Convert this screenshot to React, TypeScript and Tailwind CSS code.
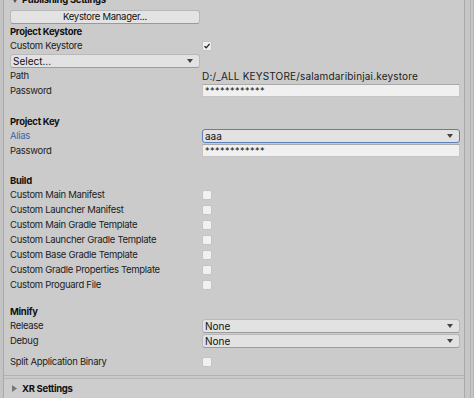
import React from "react"

const font = { fontFamily: "Inter, 'Liberation Sans', sans-serif" }

function Check({ checked }: { checked?: boolean }) {
  return (
    <div className="flex h-[10px] w-[10px] items-center justify-center rounded-[2px] border border-[#c4c4c4] bg-[#f1f1f1]">
      {checked && (
        <svg width="8" height="8" viewBox="0 0 8 8">
          <path d="M1.5 4.2 L3.2 5.8 L6.6 1.8" fill="none" stroke="#222" strokeWidth="1.3" />
        </svg>
      )}
    </div>
  )
}

function Caret() {
  return (
    <svg width="6" height="4" viewBox="0 0 6 4" className="shrink-0">
      <path d="M0 0 L6 0 L3 4 Z" fill="#444" />
    </svg>
  )
}

function Dropdown({ value, focused }: { value: string; focused?: boolean }) {
  return (
    <div
      className={
        "flex h-[14px] w-full items-center justify-between rounded-[3px] bg-[#e2e2e2] pl-[2px] pr-[6px] " +
        (focused ? "border border-[#5a7fb8]" : "border border-[#b9b9b9] border-b-[#9c9c9c]")
      }
    >
      <span className="text-[10px] leading-none text-[#111]">{value}</span>
      <Caret />
    </div>
  )
}

function TextField({ value }: { value: string }) {
  return (
    <div className="flex h-[13px] w-full items-center border border-[#c6c6c6] border-t-[#a9a9a9] bg-[#f0f0f0] px-[2px]">
      <span className="text-[9px] leading-none tracking-[0.5px] text-[#111]">{value}</span>
    </div>
  )
}

function Row({ label, blue, children }: { label: string; blue?: boolean; children?: React.ReactNode }) {
  return (
    <div className="flex h-[15px] items-center">
      <div
        className={
          "w-[192px] shrink-0 text-[9.5px] leading-none tracking-[-0.3px] " + (blue ? "text-[#3f63a3]" : "text-[#1c1c1c]")
        }
      >
        {label}
      </div>
      <div className="flex flex-1 items-center">{children}</div>
    </div>
  )
}

function Heading({ children }: { children: string }) {
  return (
    <div className="flex h-[13px] items-center text-[9.5px] font-bold leading-none tracking-[-0.3px] text-[#111]">
      {children}
    </div>
  )
}

export default function App() {
  const build = [
    "Custom Main Manifest",
    "Custom Launcher Manifest",
    "Custom Main Gradle Template",
    "Custom Launcher Gradle Template",
    "Custom Base Gradle Template",
    "Custom Gradle Properties Template",
    "Custom Proguard File",
  ]
  return (
    <div className="flex h-[398px] w-[474px] overflow-hidden bg-[#c9c9c9]" style={font}>
      <div className="w-[3px] shrink-0 bg-[#c4c4c4]" />
      <div className="flex w-[462px] shrink-0 flex-col border-x border-[#a9a9a9] bg-[#cbcbcb]">
        {/* Publishing Settings */}
        <div className="flex flex-col border-b border-[#b3b3b3] pb-[6px] pl-[6px] pr-[4px]">
          <div className="-mt-[7px] flex h-[14px] items-center gap-[4px] pl-[2px]">
            <svg width="6" height="5" viewBox="0 0 6 5"><path d="M0 0 L6 0 L3 5 Z" fill="#555" /></svg>
            <span className="text-[9.5px] font-bold leading-none tracking-[-0.3px] text-[#111]">Publishing Settings</span>
          </div>
          <div className="mb-[1px] mt-[3px] flex h-[14px] w-[190px] items-center justify-center rounded-[3px] border border-[#b8b8b8] border-b-[#999] bg-[#e3e3e3] text-[9.5px] leading-none tracking-[-0.3px] text-[#111]">
            Keystore Manager...
          </div>
          <Heading>Project Keystore</Heading>
          <Row label="Custom Keystore">
            <Check checked />
          </Row>
          <div className="flex h-[15px] items-center">
            <div className="w-[190px]">
              <Dropdown value="Select..." />
            </div>
          </div>
          <Row label="Path">
            <span className="text-[10px] leading-none tracking-[0.17px] text-[#1c1c1c]">
              D:/_ALL KEYSTORE/salamdaribinjai.keystore
            </span>
          </Row>
          <Row label="Password">
            <TextField value="************" />
          </Row>

          <div className="h-[17px]" />
          <Heading>Project Key</Heading>
          <Row label="Alias" blue>
            <Dropdown value="aaa" focused />
          </Row>
          <Row label="Password">
            <TextField value="************" />
          </Row>

          <div className="h-[16px]" />
          <Heading>Build</Heading>
          {build.map((b) => (
            <Row key={b} label={b}>
              <Check />
            </Row>
          ))}

          <div className="h-[13px]" />
          <Heading>Minify</Heading>
          <Row label="Release">
            <Dropdown value="None" />
          </Row>
          <Row label="Debug">
            <Dropdown value="None" />
          </Row>
          <div className="h-[6px]" />
          <Row label="Split Application Binary">
            <Check />
          </Row>
        </div>
        {/* XR Settings */}
        <div className="mt-[2px] flex h-[22px] items-center gap-[5px] border-t border-[#b8b8b8] bg-[#cdcdcd] pl-[8px]">
          <svg width="5" height="7" viewBox="0 0 5 7"><path d="M0 0 L5 3.5 L0 7 Z" fill="#777" /></svg>
          <span className="text-[9.5px] font-bold leading-none tracking-[-0.3px] text-[#111]">XR Settings</span>
        </div>
      </div>
      <div className="flex flex-1 justify-end gap-[2px] bg-[#c6c6c6]">
        <div className="w-px bg-[#b0b0b0]" />
        <div className="w-px bg-[#b5b5b5]" />
      </div>
    </div>
  )
}
